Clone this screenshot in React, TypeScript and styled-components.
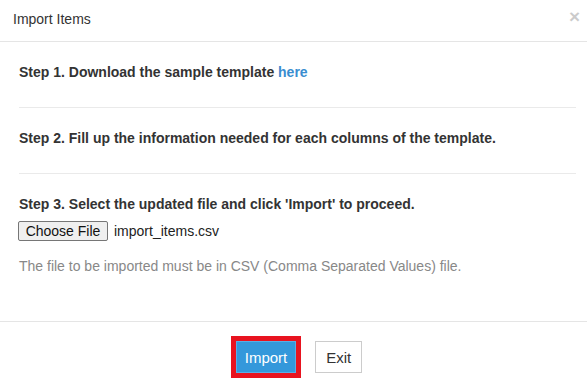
import React from 'react';
import styled, { createGlobalStyle } from 'styled-components';

const GlobalStyle = createGlobalStyle`
  html, body {
    margin: 0;
    padding: 0;
    background: #fff;
    font-family: "Liberation Sans", Arial, sans-serif;
    color: #333;
  }
`;

const Modal = styled.div`
  width: 587px;
  height: 380px;
  background: #fff;
  display: flex;
  flex-direction: column;
  overflow: hidden;
`;

const Header = styled.div`
  height: 42px;
  flex-shrink: 0;
  box-sizing: border-box;
  padding: 0 7px 0 13px;
  border-bottom: 1px solid #e5e5e5;
  display: flex;
  align-items: center;
  justify-content: space-between;
`;

const Title = styled.h4`
  margin: 0;
  font-size: 14px;
  font-weight: normal;
  color: #333;
  margin-top: -4px;
`;

const Close = styled.button`
  border: 0;
  background: none;
  padding: 0;
  font-family: "Liberation Sans", Arial, sans-serif;
  font-size: 19px;
  font-weight: bold;
  line-height: 1;
  color: #000;
  opacity: 0.2;
  margin-top: -8px;
  cursor: pointer;
`;

const Body = styled.div`
  padding: 0 11px 0 19px;
  flex-shrink: 0;
`;

const Section = styled.div<{ $last?: boolean }>`
  padding: 20px 0 ${({ $last }) => ($last ? '45px' : '25px')};
  border-bottom: ${({ $last }) => ($last ? 'none' : '1px solid #eaeaea')};
`;

const StepText = styled.div`
  font-size: 14px;
  font-weight: bold;
  line-height: 20px;
  color: #333;
`;

const Link = styled.a`
  color: #3a8dd0;
  text-decoration: none;
`;

const FileRow = styled.div`
  margin-top: 7px;
  display: flex;
  align-items: center;
  gap: 6px;
  font-size: 14px;
  color: #222;
`;

const ChooseButton = styled.button`
  font-family: "Liberation Sans", Arial, sans-serif;
  font-size: 14px;
  height: 20px;
  width: 90px;
  padding: 0;
  margin-left: -1px;
  background: #efefef;
  color: #111;
  border: 1px solid #767676;
  border-radius: 2px;
`;

const Hint = styled.div`
  margin-top: 15px;
  font-size: 14px;
  line-height: 20px;
  color: #888;
`;

const Footer = styled.div`
  flex-shrink: 0;
  border-top: 1px solid #e5e5e5;
  padding-top: 19px;
  display: flex;
  justify-content: center;
  gap: 19px;
  padding-left: 11px;
`;

const Button = styled.button<{ $primary?: boolean }>`
  font-family: "Liberation Sans", Arial, sans-serif;
  font-size: 15px;
  height: 32px;
  box-sizing: border-box;
  padding: 0 ${({ $primary }) => ($primary ? '8px' : '10px')};
  border-radius: 0;
  cursor: pointer;
  background: ${({ $primary }) => ($primary ? '#3498db' : '#fff')};
  color: ${({ $primary }) => ($primary ? '#fff' : '#333')};
  border: 1px solid ${({ $primary }) => ($primary ? '#5aaee6' : '#ccc')};
  outline: ${({ $primary }) => ($primary ? '5px solid #e8131f' : 'none')};
`;

export default function App() {
  return (
    <>
      <GlobalStyle />
      <Modal>
        <Header>
          <Title>Import Items</Title>
          <Close aria-label="Close">×</Close>
        </Header>
        <Body>
          <Section>
            <StepText>
              Step 1. Download the sample template <Link href="#">here</Link>
            </StepText>
          </Section>
          <Section>
            <StepText>Step 2. Fill up the information needed for each columns of the template.</StepText>
          </Section>
          <Section $last>
            <StepText>Step 3. Select the updated file and click 'Import' to proceed.</StepText>
            <FileRow>
              <ChooseButton>Choose File</ChooseButton>
              <span>import_items.csv</span>
            </FileRow>
            <Hint>The file to be imported must be in CSV (Comma Separated Values) file.</Hint>
          </Section>
        </Body>
        <Footer>
          <Button $primary>Import</Button>
          <Button>Exit</Button>
        </Footer>
      </Modal>
    </>
  );
}
